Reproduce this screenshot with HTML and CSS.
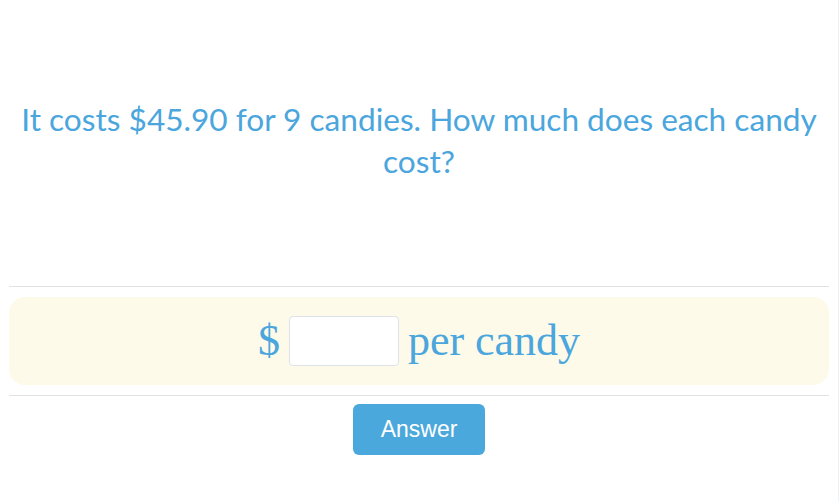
FILE: index.html
```html
<!DOCTYPE html>
<html>
<head>
<meta charset="utf-8">
<link rel="stylesheet" href="styles.css">
</head>
<body>
<div class="page">
  <div class="question">
    <p class="question-text">It costs $45.90 for 9 candies. How much does each candy cost?</p>
  </div>
  <hr class="rule">
  <div class="answer-box">
    <span class="unit">$</span>
    <input class="answer-input" type="text">
    <span class="unit">per candy</span>
  </div>
  <hr class="rule">
  <div class="actions">
    <button class="answer-btn">Answer</button>
  </div>
</div>
</body>
</html>
```

FILE: styles.css
```css
html, body {
  margin: 0;
  padding: 0;
  background: #ffffff;
}
.page {
  width: 820px;
  height: 501px;
  padding: 0 9px;
  border-right: 1px solid #eef2f2;
  box-sizing: content-box;
}
.question {
  height: 286px;
  padding-top: 98px;
  box-sizing: border-box;
}
.question-text {
  margin: 0;
  text-align: center;
  font-family: Lato, "Open Sans", sans-serif;
  font-size: 31.6px;
  line-height: 42px;
  color: #4aa6dc;
}
.rule {
  margin: 0;
  border: 0;
  border-top: 1px solid #e2e2e2;
  height: 0;
}
.answer-box {
  margin: 10px 0;
  height: 88px;
  border-radius: 16px;
  background: #fdfae9;
  display: flex;
  align-items: center;
  justify-content: center;
  gap: 9px;
  font-family: "Liberation Serif", serif;
  font-size: 44px;
  color: #4aa6dc;
}
.unit {
  line-height: 1;
}
.answer-input {
  width: 110px;
  height: 50px;
  box-sizing: border-box;
  border: 1px solid #dbe2ea;
  border-radius: 4px;
  background: #ffffff;
  margin: 0;
  padding: 0;
}
.actions {
  display: flex;
  justify-content: center;
  padding-top: 8px;
}
.answer-btn {
  width: 132px;
  height: 51px;
  border: 0;
  border-radius: 6px;
  background: #4aa8dc;
  color: #ffffff;
  font-family: "Liberation Sans", Arial, sans-serif;
  font-size: 23px;
  padding: 0;
}
```
